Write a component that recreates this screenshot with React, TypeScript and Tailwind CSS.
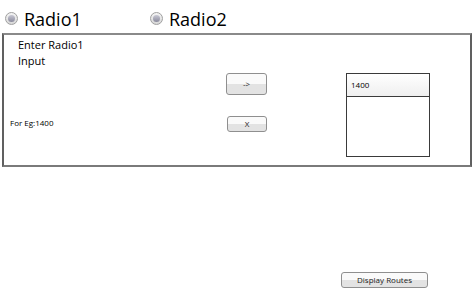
import React from "react";

function Radio({ label }: { label: string }) {
  return (
    <label className="flex items-center gap-[6px]">
      <span className="flex h-[13px] w-[13px] items-center justify-center rounded-full border border-[#a0a0a0] bg-gradient-to-b from-[#f4f4f4] to-[#d8d8d8]">
        <span className="h-[7px] w-[7px] rounded-full bg-gradient-to-b from-[#c8c8d4] to-[#8a8a9c]" />
      </span>
      <span className="text-[18px] leading-none text-black">{label}</span>
    </label>
  );
}

function SmallButton({ label, className }: { label: string; className: string }) {
  return (
    <button
      className={`flex items-center justify-center rounded-[3px] border border-[#8f8f8f] bg-gradient-to-b from-[#fafafa] from-50% to-[#e3e3e3] to-50% text-[8px] leading-none text-[#222] ${className}`}
    >
      {label}
    </button>
  );
}

export default function App() {
  return (
    <div className="h-[291px] w-[474px] bg-white font-['Open_Sans','Liberation_Sans',sans-serif]">
      {/* radio row */}
      <div className="flex h-[33px] items-center pl-[5px] pt-[4px]">
        <div className="w-[145px]">
          <Radio label="Radio1" />
        </div>
        <Radio label="Radio2" />
      </div>

      {/* main panel */}
      <div className="ml-[2px] flex h-[134px] w-[470px] border-2 border-t-[#8a8a8a] border-x-[#606060] border-b-[#7a7a7a]">
        <div className="flex w-[222px] flex-col">
          <div className="pl-[14px] pt-[2px] text-[11px] leading-[16px] text-black">
            <div>Enter Radio1</div>
            <div>Input</div>
          </div>
          <div className="mt-[50px] pl-[6px] text-[8px] leading-none text-black">For Eg:1400</div>
        </div>

        <div className="flex w-[42px] flex-col pt-[38px]">
          <SmallButton label="->" className="h-[22px] w-[41px]" />
          <SmallButton label="X" className="ml-[1px] mt-[21px] h-[16px] w-[40px]" />
        </div>

        <div className="ml-[78px] mt-[38px] flex h-[84px] w-[84px] flex-col border border-[#3a3a3a]">
          <div className="flex h-[23px] items-center border-b border-[#3a3a3a] bg-gradient-to-b from-[#ffffff] to-[#efefef] pl-[4px] text-[8px] text-black">
            1400
          </div>
          <div className="flex-1 bg-white" />
        </div>
      </div>

      {/* bottom */}
      <div className="mt-[105px] flex pl-[341px]">
        <SmallButton label="Display Routes" className="h-[16px] w-[87px]" />
      </div>
    </div>
  );
}
